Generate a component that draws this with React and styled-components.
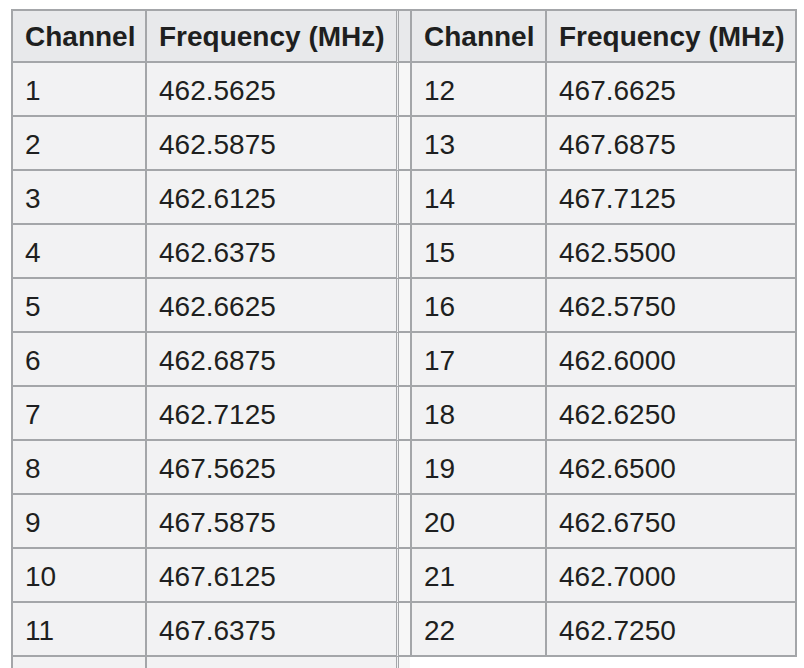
import React from "react";
import styled, { createGlobalStyle } from "styled-components";

const Global = createGlobalStyle`
  html, body { margin: 0; padding: 0; background: #ffffff; }
  body { overflow: hidden; }
  #root { width: 804px; height: 668px; overflow: hidden; }
`;

const Page = styled.div`
  display: flex;
  align-items: flex-start;
  padding: 9px 0 0 11px;
  height: 668px;
  box-sizing: border-box;
  overflow: hidden;
  font-family: "Liberation Sans", Arial, sans-serif;
  color: #1e1f20;
`;

const Table = styled.table`
  border-collapse: separate;
  border-spacing: 0;
  border-top: 2px solid #a4a6a9;
  border-left: 2px solid #a4a6a9;
  table-layout: fixed;
  flex: none;
`;

const HeadCell = styled.th`
  box-sizing: border-box;
  width: ${(p) => p.$w}px;
  height: 52px;
  padding: 2px ${(p) => (p.$sliver ? 0 : 12)}px 0;
  background: #e8e9eb;
  border-right: ${(p) => (p.$double ? "3px double #a4a6a9" : p.$sliver ? "none" : "2px solid #a4a6a9")};
  border-bottom: 2px solid #a4a6a9;
  font-size: 28px;
  font-weight: 700;
  text-align: left;
  white-space: nowrap;
  vertical-align: middle;
`;

const Cell = styled.td`
  box-sizing: border-box;
  width: ${(p) => p.$w}px;
  height: 54px;
  padding: 3px ${(p) => (p.$sliver ? 0 : 12)}px 0;
  background: ${(p) => (p.$sliver ? "#f7f7f7" : "#f2f2f3")};
  border-right: ${(p) => (p.$double ? "3px double #a4a6a9" : p.$sliver ? "none" : "2px solid #a4a6a9")};
  border-bottom: 2px solid #a4a6a9;
  font-size: 28px;
  text-align: left;
  white-space: nowrap;
  vertical-align: middle;
`;

const LeftTable = styled(Table)`
  width: 399px;
`;

const RightTable = styled(Table)`
  width: 387px;
`;

const left = [
  ["1", "462.5625"],
  ["2", "462.5875"],
  ["3", "462.6125"],
  ["4", "462.6375"],
  ["5", "462.6625"],
  ["6", "462.6875"],
  ["7", "462.7125"],
  ["8", "467.5625"],
  ["9", "467.5875"],
  ["10", "467.6125"],
  ["11", "467.6375"],
];

const right = [
  ["12", "467.6625"],
  ["13", "467.6875"],
  ["14", "467.7125"],
  ["15", "462.5500"],
  ["16", "462.5750"],
  ["17", "462.6000"],
  ["18", "462.6250"],
  ["19", "462.6500"],
  ["20", "462.6750"],
  ["21", "462.7000"],
  ["22", "462.7250"],
];

export default function App() {
  return (
    <>
      <Global />
      <Page>
        <LeftTable>
          <thead>
            <tr>
              <HeadCell $w={134}>Channel</HeadCell>
              <HeadCell $w={252} $double>Frequency (MHz)</HeadCell>
              <HeadCell $w={11} $sliver />
            </tr>
          </thead>
          <tbody>
            {left.map(([c, f]) => (
              <tr key={c}>
                <Cell $w={134}>{c}</Cell>
                <Cell $w={252} $double>{f}</Cell>
                <Cell $w={11} $sliver />
              </tr>
            ))}
            <tr>
              <Cell $w={134} />
              <Cell $w={252} $double />
              <Cell $w={11} $sliver />
            </tr>
          </tbody>
        </LeftTable>
        <RightTable>
          <thead>
            <tr>
              <HeadCell $w={135}>Channel</HeadCell>
              <HeadCell $w={250}>Frequency (MHz)</HeadCell>
            </tr>
          </thead>
          <tbody>
            {right.map(([c, f]) => (
              <tr key={c}>
                <Cell $w={135}>{c}</Cell>
                <Cell $w={250}>{f}</Cell>
              </tr>
            ))}
          </tbody>
        </RightTable>
      </Page>
    </>
  );
}
